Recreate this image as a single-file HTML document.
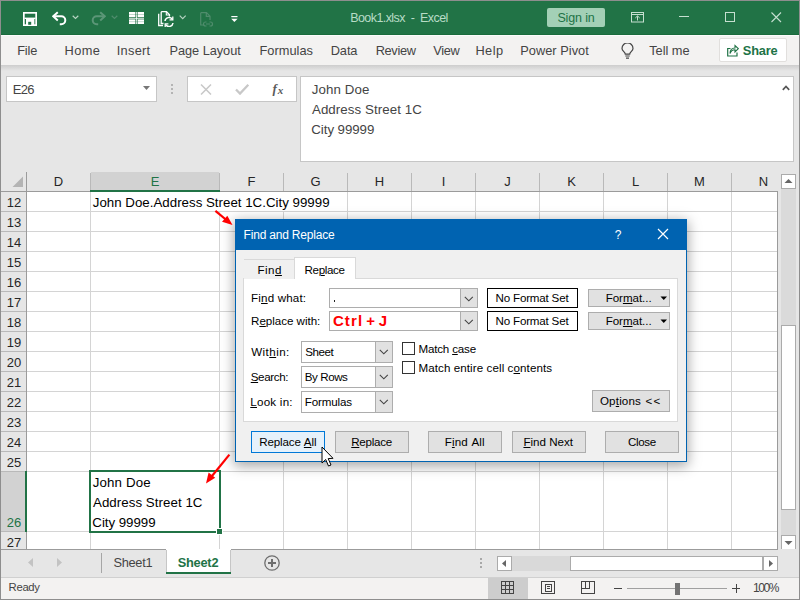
<!DOCTYPE html>
<html><head><meta charset="utf-8">
<style>
*{box-sizing:border-box;margin:0;padding:0}
html,body{width:800px;height:600px;overflow:hidden;background:#e6e6e6;font-family:"Liberation Sans",sans-serif;}
.a{position:absolute}
.t{position:absolute;white-space:nowrap}
u{text-decoration:underline;text-underline-offset:1px;text-decoration-thickness:1.2px}
#win{position:absolute;left:0;top:0;width:800px;height:600px;overflow:hidden;background:#e6e6e6}
</style></head><body>
<div id="win">
<div class="a" style="left:0px;top:0px;width:800px;height:1px;background:#8e8e8e;"></div>
<div class="a" style="left:0px;top:0px;width:1px;height:600px;background:#8e8e8e;"></div>
<div class="a" style="left:799px;top:0px;width:1px;height:600px;background:#8e8e8e;"></div>
<div class="a" style="left:0px;top:599px;width:800px;height:1px;background:#8e8e8e;"></div>
<div class="a" style="left:1px;top:1px;width:798px;height:34px;background:#217346;"></div>
<div class="t" style="left:350.22px;top:9.67px;font-size:12.5px;line-height:16px;color:#b8dcc6;letter-spacing:-0.576px;">Book1.xlsx&nbsp;&nbsp;-&nbsp;&nbsp;Excel</div>
<div class="a" style="left:547px;top:8px;width:58px;height:19px;background:#a3d0b6;border-radius:2px;"></div>
<div class="t" style="left:557.43px;top:9.67px;font-size:12.5px;line-height:16px;color:#217346;letter-spacing:-0.140px;">Sign&nbsp;in</div>
<div class="a" style="left:1px;top:34px;width:798px;height:1px;background:#1a6b3c;"></div>
<div class="a" style="left:1px;top:35px;width:798px;height:30px;background:#f3f2f1;"></div>
<div class="a" style="left:1px;top:35px;width:798px;height:1px;background:#fbfbfb;"></div>
<div class="a" style="left:1px;top:65px;width:798px;height:6px;background:linear-gradient(#cdcdcd,#e6e6e6);"></div>
<div class="t" style="left:17.15px;top:42.06px;font-size:12.8px;line-height:17px;color:#444;letter-spacing:-0.169px;">File</div>
<div class="t" style="left:64.45px;top:42.06px;font-size:12.8px;line-height:17px;color:#444;letter-spacing:0.458px;">Home</div>
<div class="t" style="left:116.82px;top:42.06px;font-size:12.8px;line-height:17px;color:#444;letter-spacing:0.252px;">Insert</div>
<div class="t" style="left:169.45px;top:42.06px;font-size:12.8px;line-height:17px;color:#444;letter-spacing:-0.049px;">Page&nbsp;Layout</div>
<div class="t" style="left:259.45px;top:42.06px;font-size:12.8px;line-height:17px;color:#444;letter-spacing:0.024px;">Formulas</div>
<div class="t" style="left:330.70px;top:42.06px;font-size:12.8px;line-height:17px;color:#444;letter-spacing:-0.079px;">Data</div>
<div class="t" style="left:375.70px;top:42.06px;font-size:12.8px;line-height:17px;color:#444;letter-spacing:-0.340px;">Review</div>
<div class="t" style="left:433.19px;top:42.06px;font-size:12.8px;line-height:17px;color:#444;letter-spacing:-0.323px;">View</div>
<div class="t" style="left:475.45px;top:42.06px;font-size:12.8px;line-height:17px;color:#444;letter-spacing:0.421px;">Help</div>
<div class="t" style="left:520.20px;top:42.06px;font-size:12.8px;line-height:17px;color:#444;letter-spacing:0.035px;">Power&nbsp;Pivot</div>
<div class="t" style="left:649.21px;top:42.06px;font-size:12.8px;line-height:17px;color:#444;letter-spacing:-0.018px;">Tell&nbsp;me</div>
<div class="a" style="left:719px;top:38px;width:68px;height:24px;background:#fff;border:1px solid #e1dfdd;border-radius:2px;"></div>
<div class="t" style="left:742.83px;top:42.06px;font-size:12.8px;line-height:17px;color:#217346;letter-spacing:-0.192px;font-weight:bold;">Share</div>
<div class="a" style="left:6px;top:76px;width:151px;height:26px;background:#fff;border:1px solid #c6c6c6;"></div>
<div class="t" style="left:12.73px;top:81.00px;font-size:13px;line-height:17px;color:#444;letter-spacing:-0.647px;">E26</div>
<div class="a" style="left:187px;top:76px;width:110px;height:26px;background:#fff;border:1px solid #c6c6c6;"></div>
<div class="a" style="left:300px;top:76px;width:494px;height:86px;background:#fff;border:1px solid #c6c6c6;"></div>
<div class="t" style="left:311.79px;top:80.89px;font-size:13.3px;line-height:17px;color:#444;letter-spacing:0.088px;">John&nbsp;Doe</div>
<div class="t" style="left:311.97px;top:100.89px;font-size:13.3px;line-height:17px;color:#444;letter-spacing:0.070px;">Address&nbsp;Street&nbsp;1C</div>
<div class="t" style="left:311.32px;top:120.89px;font-size:13.3px;line-height:17px;color:#444;letter-spacing:-0.059px;">City&nbsp;99999</div>
<div class="a" style="left:27px;top:192px;width:751px;height:358px;background:#fff;"></div>
<div class="a" style="left:90px;top:192px;width:1px;height:358px;background:#d4d4d4;"></div>
<div class="a" style="left:90px;top:173px;width:1px;height:18px;background:#b9b9b9;"></div>
<div class="a" style="left:219px;top:192px;width:1px;height:358px;background:#d4d4d4;"></div>
<div class="a" style="left:219px;top:173px;width:1px;height:18px;background:#b9b9b9;"></div>
<div class="a" style="left:283px;top:192px;width:1px;height:358px;background:#d4d4d4;"></div>
<div class="a" style="left:283px;top:173px;width:1px;height:18px;background:#b9b9b9;"></div>
<div class="a" style="left:347px;top:192px;width:1px;height:358px;background:#d4d4d4;"></div>
<div class="a" style="left:347px;top:173px;width:1px;height:18px;background:#b9b9b9;"></div>
<div class="a" style="left:411px;top:192px;width:1px;height:358px;background:#d4d4d4;"></div>
<div class="a" style="left:411px;top:173px;width:1px;height:18px;background:#b9b9b9;"></div>
<div class="a" style="left:475px;top:192px;width:1px;height:358px;background:#d4d4d4;"></div>
<div class="a" style="left:475px;top:173px;width:1px;height:18px;background:#b9b9b9;"></div>
<div class="a" style="left:539px;top:192px;width:1px;height:358px;background:#d4d4d4;"></div>
<div class="a" style="left:539px;top:173px;width:1px;height:18px;background:#b9b9b9;"></div>
<div class="a" style="left:603px;top:192px;width:1px;height:358px;background:#d4d4d4;"></div>
<div class="a" style="left:603px;top:173px;width:1px;height:18px;background:#b9b9b9;"></div>
<div class="a" style="left:667px;top:192px;width:1px;height:358px;background:#d4d4d4;"></div>
<div class="a" style="left:667px;top:173px;width:1px;height:18px;background:#b9b9b9;"></div>
<div class="a" style="left:731px;top:192px;width:1px;height:358px;background:#d4d4d4;"></div>
<div class="a" style="left:731px;top:173px;width:1px;height:18px;background:#b9b9b9;"></div>
<div class="a" style="left:27px;top:211px;width:751px;height:1px;background:#d4d4d4;"></div>
<div class="a" style="left:1px;top:211px;width:25px;height:1px;background:#b9b9b9;"></div>
<div class="a" style="left:27px;top:231px;width:751px;height:1px;background:#d4d4d4;"></div>
<div class="a" style="left:1px;top:231px;width:25px;height:1px;background:#b9b9b9;"></div>
<div class="a" style="left:27px;top:251px;width:751px;height:1px;background:#d4d4d4;"></div>
<div class="a" style="left:1px;top:251px;width:25px;height:1px;background:#b9b9b9;"></div>
<div class="a" style="left:27px;top:271px;width:751px;height:1px;background:#d4d4d4;"></div>
<div class="a" style="left:1px;top:271px;width:25px;height:1px;background:#b9b9b9;"></div>
<div class="a" style="left:27px;top:291px;width:751px;height:1px;background:#d4d4d4;"></div>
<div class="a" style="left:1px;top:291px;width:25px;height:1px;background:#b9b9b9;"></div>
<div class="a" style="left:27px;top:311px;width:751px;height:1px;background:#d4d4d4;"></div>
<div class="a" style="left:1px;top:311px;width:25px;height:1px;background:#b9b9b9;"></div>
<div class="a" style="left:27px;top:331px;width:751px;height:1px;background:#d4d4d4;"></div>
<div class="a" style="left:1px;top:331px;width:25px;height:1px;background:#b9b9b9;"></div>
<div class="a" style="left:27px;top:351px;width:751px;height:1px;background:#d4d4d4;"></div>
<div class="a" style="left:1px;top:351px;width:25px;height:1px;background:#b9b9b9;"></div>
<div class="a" style="left:27px;top:371px;width:751px;height:1px;background:#d4d4d4;"></div>
<div class="a" style="left:1px;top:371px;width:25px;height:1px;background:#b9b9b9;"></div>
<div class="a" style="left:27px;top:391px;width:751px;height:1px;background:#d4d4d4;"></div>
<div class="a" style="left:1px;top:391px;width:25px;height:1px;background:#b9b9b9;"></div>
<div class="a" style="left:27px;top:411px;width:751px;height:1px;background:#d4d4d4;"></div>
<div class="a" style="left:1px;top:411px;width:25px;height:1px;background:#b9b9b9;"></div>
<div class="a" style="left:27px;top:431px;width:751px;height:1px;background:#d4d4d4;"></div>
<div class="a" style="left:1px;top:431px;width:25px;height:1px;background:#b9b9b9;"></div>
<div class="a" style="left:27px;top:451px;width:751px;height:1px;background:#d4d4d4;"></div>
<div class="a" style="left:1px;top:451px;width:25px;height:1px;background:#b9b9b9;"></div>
<div class="a" style="left:27px;top:471px;width:751px;height:1px;background:#d4d4d4;"></div>
<div class="a" style="left:1px;top:471px;width:25px;height:1px;background:#b9b9b9;"></div>
<div class="a" style="left:27px;top:531px;width:751px;height:1px;background:#d4d4d4;"></div>
<div class="a" style="left:1px;top:531px;width:25px;height:1px;background:#b9b9b9;"></div>
<div class="a" style="left:219px;top:192px;width:1px;height:19px;background:#fff;"></div>
<div class="a" style="left:283px;top:192px;width:1px;height:19px;background:#fff;"></div>
<div class="a" style="left:26px;top:172px;width:1px;height:378px;background:#9b9b9b;"></div>
<div class="a" style="left:1px;top:191px;width:777px;height:1px;background:#9b9b9b;"></div>
<div class="a" style="left:777px;top:192px;width:1px;height:358px;background:#9b9b9b;"></div>
<div class="a" style="left:91px;top:172px;width:128px;height:18px;background:#d2d2d2;"></div>
<div class="a" style="left:90px;top:190px;width:130px;height:2px;background:#217346;"></div>
<div class="a" style="left:1px;top:472px;width:24px;height:59px;background:#d2d2d2;"></div>
<div class="a" style="left:25px;top:471px;width:2px;height:61px;background:#217346;"></div>
<svg class="a" style="left:12px;top:176px" width="12" height="12"><path d="M11 0.5 L11 11 L0.5 11 Z" fill="#b4b4b4"/></svg>
<div class="t" style="left:58.5px;top:173px;width:60px;margin-left:-30px;text-align:center;font-size:13px;line-height:18px;color:#262626">D</div>
<div class="t" style="left:155px;top:173px;width:60px;margin-left:-30px;text-align:center;font-size:13px;line-height:18px;color:#217346">E</div>
<div class="t" style="left:251.5px;top:173px;width:60px;margin-left:-30px;text-align:center;font-size:13px;line-height:18px;color:#262626">F</div>
<div class="t" style="left:315.5px;top:173px;width:60px;margin-left:-30px;text-align:center;font-size:13px;line-height:18px;color:#262626">G</div>
<div class="t" style="left:379.5px;top:173px;width:60px;margin-left:-30px;text-align:center;font-size:13px;line-height:18px;color:#262626">H</div>
<div class="t" style="left:443.5px;top:173px;width:60px;margin-left:-30px;text-align:center;font-size:13px;line-height:18px;color:#262626">I</div>
<div class="t" style="left:507.5px;top:173px;width:60px;margin-left:-30px;text-align:center;font-size:13px;line-height:18px;color:#262626">J</div>
<div class="t" style="left:571.5px;top:173px;width:60px;margin-left:-30px;text-align:center;font-size:13px;line-height:18px;color:#262626">K</div>
<div class="t" style="left:635.5px;top:173px;width:60px;margin-left:-30px;text-align:center;font-size:13px;line-height:18px;color:#262626">L</div>
<div class="t" style="left:699.5px;top:173px;width:60px;margin-left:-30px;text-align:center;font-size:13px;line-height:18px;color:#262626">M</div>
<div class="t" style="left:763.5px;top:173px;width:60px;margin-left:-30px;text-align:center;font-size:13px;line-height:18px;color:#262626">N</div>
<div class="t" style="left:1.6px;top:194px;width:25px;text-align:center;font-size:13px;line-height:18px;color:#262626">12</div>
<div class="t" style="left:1.6px;top:214px;width:25px;text-align:center;font-size:13px;line-height:18px;color:#262626">13</div>
<div class="t" style="left:1.6px;top:234px;width:25px;text-align:center;font-size:13px;line-height:18px;color:#262626">14</div>
<div class="t" style="left:1.6px;top:254px;width:25px;text-align:center;font-size:13px;line-height:18px;color:#262626">15</div>
<div class="t" style="left:1.6px;top:274px;width:25px;text-align:center;font-size:13px;line-height:18px;color:#262626">16</div>
<div class="t" style="left:1.6px;top:294px;width:25px;text-align:center;font-size:13px;line-height:18px;color:#262626">17</div>
<div class="t" style="left:1.6px;top:314px;width:25px;text-align:center;font-size:13px;line-height:18px;color:#262626">18</div>
<div class="t" style="left:1.6px;top:334px;width:25px;text-align:center;font-size:13px;line-height:18px;color:#262626">19</div>
<div class="t" style="left:1.6px;top:354px;width:25px;text-align:center;font-size:13px;line-height:18px;color:#262626">20</div>
<div class="t" style="left:1.6px;top:374px;width:25px;text-align:center;font-size:13px;line-height:18px;color:#262626">21</div>
<div class="t" style="left:1.6px;top:394px;width:25px;text-align:center;font-size:13px;line-height:18px;color:#262626">22</div>
<div class="t" style="left:1.6px;top:414px;width:25px;text-align:center;font-size:13px;line-height:18px;color:#262626">23</div>
<div class="t" style="left:1.6px;top:434px;width:25px;text-align:center;font-size:13px;line-height:18px;color:#262626">24</div>
<div class="t" style="left:1.6px;top:454px;width:25px;text-align:center;font-size:13px;line-height:18px;color:#262626">25</div>
<div class="t" style="left:1.6px;top:514px;width:25px;text-align:center;font-size:13px;line-height:18px;color:#217346">26</div>
<div class="t" style="left:1.6px;top:534px;width:25px;text-align:center;font-size:13px;line-height:18px;color:#262626">27</div>
<div class="t" style="left:92.79px;top:193.89px;font-size:13.3px;line-height:17px;color:#000;letter-spacing:0.007px;">John&nbsp;Doe.Address&nbsp;Street&nbsp;1C.City&nbsp;99999</div>
<div class="t" style="left:92.79px;top:473.89px;font-size:13.3px;line-height:17px;color:#000;letter-spacing:0.124px;">John&nbsp;Doe</div>
<div class="t" style="left:92.97px;top:493.89px;font-size:13.3px;line-height:17px;color:#000;letter-spacing:0.054px;">Address&nbsp;Street&nbsp;1C</div>
<div class="t" style="left:92.32px;top:513.89px;font-size:13.3px;line-height:17px;color:#000;letter-spacing:-0.031px;">City&nbsp;99999</div>
<div class="a" style="left:89px;top:470px;width:132px;height:63px;border:2px solid #217346;"></div>
<div class="a" style="left:216px;top:528px;width:7px;height:7px;background:#fff;"></div>
<div class="a" style="left:217px;top:529px;width:5px;height:5px;background:#217346;"></div>
<div class="a" style="left:778px;top:172px;width:21px;height:378px;background:#e6e6e6;"></div>
<div class="a" style="left:781px;top:174px;width:15px;height:15px;background:#fff;border:1px solid #ababab;"></div>
<div class="a" style="left:781px;top:189px;width:15px;height:136px;background:#dadada;"></div>
<div class="a" style="left:781px;top:325px;width:15px;height:185px;background:#fff;border:1px solid #ababab;"></div>
<div class="a" style="left:781px;top:510px;width:15px;height:25px;background:#dadada;"></div>
<div class="a" style="left:781px;top:535px;width:15px;height:15px;background:#fff;border:1px solid #ababab;"></div>
<svg class="a" style="left:784px;top:178px" width="10" height="6"><path d="M0.5 5 L4.5 1 L8.5 5 Z" fill="#666"/></svg>
<svg class="a" style="left:784px;top:540px" width="10" height="6"><path d="M0.5 1 L4.5 5 L8.5 1 Z" fill="#666"/></svg>
<div class="a" style="left:1px;top:549px;width:798px;height:28px;background:#e6e6e6;"></div>
<div class="a" style="left:1px;top:549px;width:777px;height:1px;background:#9b9b9b;"></div>
<div class="a" style="left:166px;top:549px;width:65px;height:25px;background:#fff;"></div>
<div class="a" style="left:166px;top:550px;width:1px;height:24px;background:#c6c6c6;"></div>
<div class="a" style="left:230px;top:550px;width:1px;height:24px;background:#c6c6c6;"></div>
<div class="a" style="left:166px;top:572px;width:65px;height:2px;background:#217346;"></div>
<div class="a" style="left:101px;top:553px;width:1px;height:20px;background:#a6a6a6;"></div>
<svg class="a" style="left:27px;top:557px" width="8" height="12"><path d="M6 1 L1 5.5 L6 10 Z" fill="#c3c3c3"/></svg>
<svg class="a" style="left:55px;top:557px" width="8" height="12"><path d="M2 1 L7 5.5 L2 10 Z" fill="#c3c3c3"/></svg>
<div class="t" style="left:113.42px;top:554.06px;font-size:12.8px;line-height:17px;color:#444;letter-spacing:-0.273px;">Sheet1</div>
<div class="t" style="left:177.63px;top:554.06px;font-size:12.8px;line-height:17px;color:#217346;letter-spacing:-0.219px;font-weight:bold;">Sheet2</div>
<svg class="a" style="left:263px;top:554px" width="18" height="18"><circle cx="9" cy="9" r="7.2" fill="none" stroke="#6e6e6e" stroke-width="1.3"/><path d="M5 9 H13 M9 5 V13" stroke="#6e6e6e" stroke-width="2"/></svg>
<div class="a" style="left:480px;top:558px;width:2px;height:2px;background:#a8a8a8;"></div>
<div class="a" style="left:480px;top:562px;width:2px;height:2px;background:#a8a8a8;"></div>
<div class="a" style="left:480px;top:566px;width:2px;height:2px;background:#a8a8a8;"></div>
<div class="a" style="left:497px;top:556px;width:15px;height:15px;background:#fff;border:1px solid #ababab;"></div>
<div class="a" style="left:512px;top:556px;width:58px;height:15px;background:#d9d9d9;"></div>
<div class="a" style="left:570px;top:556px;width:193px;height:15px;background:#fff;border:1px solid #ababab;"></div>
<div class="a" style="left:763px;top:556px;width:15px;height:15px;background:#fff;border:1px solid #ababab;"></div>
<svg class="a" style="left:500px;top:558px" width="8" height="11"><path d="M6 2 L2 5.5 L6 9 Z" fill="#666"/></svg>
<svg class="a" style="left:767px;top:558px" width="8" height="11"><path d="M2 2 L6 5.5 L2 9 Z" fill="#666"/></svg>
<div class="a" style="left:1px;top:577px;width:798px;height:22px;background:#f3f2f1;"></div>
<div class="a" style="left:1px;top:577px;width:798px;height:1px;background:#d0d0d0;"></div>
<div class="t" style="left:8.57px;top:580.08px;font-size:11.3px;line-height:15px;color:#444;letter-spacing:-0.304px;">Ready</div>
<div class="a" style="left:488px;top:578px;width:40px;height:21px;background:#cdcdcd;"></div>
<div class="a" style="left:614px;top:588px;width:8px;height:1px;background:#444;"></div>
<div class="a" style="left:627px;top:588px;width:100px;height:1px;background:#a0a0a0;"></div>
<div class="a" style="left:675px;top:583px;width:5px;height:12px;background:#737373;"></div>
<div class="a" style="left:732px;top:588px;width:8px;height:1px;background:#444;"></div>
<div class="a" style="left:735.5px;top:584px;width:1px;height:9px;background:#444;"></div>
<div class="t" style="left:753.09px;top:579.84px;font-size:12px;line-height:16px;color:#444;letter-spacing:-1.450px;">100%</div>
<svg class="a" style="left:23px;top:12px;" width="14" height="14" viewBox="0 0 14 14"><rect x="0.85" y="0.85" width="12.3" height="12.3" fill="none" stroke="#fff" stroke-width="1.7"/><rect x="3" y="6" width="8.4" height="7.5" fill="#fff"/><rect x="5.2" y="9.8" width="3" height="3" fill="#217346"/><rect x="1.5" y="5.6" width="11" height="1.4" fill="#fff"/></svg>
<svg class="a" style="left:52px;top:11px;" width="15" height="15" viewBox="0 0 15 15"><path d="M5.8 1.2 L1.2 5.3 L5.8 9.4" fill="none" stroke="#fff" stroke-width="2" stroke-linejoin="miter"/><path d="M2 5.3 H9.3 A4 4 0 0 1 9.3 13.3 H7.8" fill="none" stroke="#fff" stroke-width="2"/></svg>
<svg class="a" style="left:72px;top:15.3px;" width="8" height="5" viewBox="0 0 8 5"><path d="M0.7 0.7 L3.5 3.4 L6.3 0.7" fill="none" stroke="#b5d3c1" stroke-width="1.2"/></svg>
<svg class="a" style="left:91.2px;top:11px;" width="15" height="15" viewBox="0 0 15 15"><path d="M9.2 1.2 L13.8 5.3 L9.2 9.4" fill="none" stroke="#5b9677" stroke-width="2"/><path d="M13 5.3 H5.7 A4 4 0 0 0 5.7 13.3 H7.2" fill="none" stroke="#5b9677" stroke-width="2"/></svg>
<svg class="a" style="left:111px;top:15.3px;" width="8" height="5" viewBox="0 0 8 5"><path d="M0.7 0.7 L3.5 3.4 L6.3 0.7" fill="none" stroke="#4f8c6c" stroke-width="1.2"/></svg>
<svg class="a" style="left:128.9px;top:12.3px;" width="15.5" height="12.2" viewBox="0 0 15.5 12.2"><rect x="0" y="0" width="6.4" height="5.2" fill="#fff"/><rect x="8.6" y="0" width="6.9" height="5.2" fill="#fff"/><rect x="0" y="7.4" width="6.4" height="4.8" fill="#fff"/><rect x="8.6" y="7.4" width="6.9" height="4.8" fill="#fff"/><rect x="7.1" y="0" width="0.8" height="12.2" fill="#fff"/><rect x="0" y="5.9" width="15.5" height="0.8" fill="#fff"/><rect x="0" y="2.3" width="15.5" height="0.6" fill="#217346" opacity=".45"/><rect x="0" y="9.5" width="15.5" height="0.6" fill="#217346" opacity=".45"/></svg>
<svg class="a" style="left:158px;top:11px;" width="17" height="16" viewBox="0 0 17 16"><path d="M0.7 2.7 V14.5 H5" fill="none" stroke="#fff" stroke-width="1.3"/><path d="M3.2 0.7 H8.5 L11.5 3.7 V5.5 M3.2 0.7 V12.5 H5.5" fill="none" stroke="#fff" stroke-width="1.3"/><path d="M8.3 0.9 V4 H11.3" fill="none" stroke="#fff" stroke-width="1.1"/><path d="M7 10 A4 4 0 0 1 14.3 8.3 M15 12 A4 4 0 0 1 7.7 13.7" fill="none" stroke="#fff" stroke-width="1.5"/><path d="M14.8 5.6 V8.9 H11.5" fill="none" stroke="#fff" stroke-width="1.3"/><path d="M7.2 16 V12.9 H10.4" fill="none" stroke="#fff" stroke-width="1.3"/></svg>
<svg class="a" style="left:179px;top:15px;" width="8" height="5" viewBox="0 0 8 5"><path d="M0.7 0.7 L3.7 3.7 L6.7 0.7" fill="none" stroke="#b5d3c1" stroke-width="1.2"/></svg>
<svg class="a" style="left:200px;top:12px;" width="14" height="15" viewBox="0 0 14 15"><path d="M0.7 0.7 H6.5 L10 4.2 V8 M0.7 0.7 V13 H3.5 M6.3 0.9 V4.4 H9.8" fill="none" stroke="#4f8c6c" stroke-width="1.2"/><path d="M6.5 10 H5.5 A2 2 0 0 0 5.5 14 H6.5 M9.5 10 H10.5 A2 2 0 0 1 10.5 14 H9.5 M6 12 H10" fill="none" stroke="#4f8c6c" stroke-width="1.2"/></svg>
<svg class="a" style="left:231px;top:16px;" width="7" height="6" viewBox="0 0 7 6"><rect x="0.3" y="0" width="6.2" height="1.2" fill="#fff"/><path d="M0.2 2.8 H6.6 L3.4 6 Z" fill="#fff"/></svg>
<svg class="a" style="left:631px;top:12px;" width="14" height="11" viewBox="0 0 14 11"><rect x="0.5" y="0.5" width="12" height="9.5" fill="none" stroke="#c6dfd0" stroke-width="1"/><path d="M0.5 2.5 H12.5" stroke="#c6dfd0" stroke-width="1"/><path d="M6.5 8.5 V4.2 M4.3 6 L6.5 3.9 L8.7 6" fill="none" stroke="#c6dfd0" stroke-width="1"/></svg>
<div class="a" style="left:679px;top:16px;width:10px;height:1px;background:#c6dfd0"></div>
<div class="a" style="left:725px;top:12px;width:10px;height:10px;border:1px solid #c6dfd0"></div>
<svg class="a" style="left:771px;top:12px;" width="11" height="11" viewBox="0 0 11 11"><path d="M0.5 0.5 L10 10 M10 0.5 L0.5 10" stroke="#c6dfd0" stroke-width="1.1" fill="none"/></svg>
<svg class="a" style="left:621px;top:43px;" width="13" height="17" viewBox="0 0 13 17"><path d="M4.3 11.2 C4.3 9 1 8.2 1 5.4 A5.4 5.4 0 0 1 12 5.4 C12 8.2 8.7 9 8.7 11.2 Z" fill="none" stroke="#444" stroke-width="1.2"/><path d="M4.3 13 H8.7 M5 15.2 H8" stroke="#444" stroke-width="1.2"/></svg>
<svg class="a" style="left:727px;top:44px;" width="12" height="13" viewBox="0 0 12 13"><path d="M3.5 4.5 H0.7 V12 H10 V8.5" fill="none" stroke="#217346" stroke-width="1.2"/><path d="M3 9.5 C3 6 5 4 8 4 V1.5 L11.3 4.7 L8 8 V5.8 C6 5.8 4.2 6.5 3 9.5 Z" fill="none" stroke="#217346" stroke-width="1.1"/></svg>
<svg class="a" style="left:143px;top:86px;" width="8" height="5" viewBox="0 0 8 5"><path d="M0 0 H7 L3.5 4 Z" fill="#777"/></svg>
<div class="a" style="left:171px;top:84px;width:2px;height:2px;background:#b4b4b4"></div>
<div class="a" style="left:171px;top:88px;width:2px;height:2px;background:#b4b4b4"></div>
<div class="a" style="left:171px;top:92px;width:2px;height:2px;background:#b4b4b4"></div>
<svg class="a" style="left:200px;top:84px;" width="12" height="11" viewBox="0 0 12 11"><path d="M1 0.5 L11 10.5 M11 0.5 L1 10.5" stroke="#c8c8c8" stroke-width="1.5" fill="none"/></svg>
<svg class="a" style="left:235px;top:84px;" width="15" height="11" viewBox="0 0 15 11"><path d="M1 5.5 L5 9.6 L13.3 0.8" stroke="#c8c8c8" stroke-width="2.3" fill="none"/></svg>
<div class="t" style="left:272.5px;top:81px;font-family:'Liberation Serif',serif;font-style:italic;font-weight:bold;font-size:13px;line-height:15px;color:#5a5a5a;letter-spacing:0.8px">f<span style="font-size:11px;position:relative;top:1px;left:0px;letter-spacing:0">x</span></div>
<svg class="a" style="left:781.5px;top:85px;" width="8" height="6" viewBox="0 0 8 6"><path d="M0.8 4.8 L4 1.5 L7.2 4.8" stroke="#555" stroke-width="1.7" fill="none"/></svg>
<svg class="a" style="left:501px;top:581px;" width="13" height="13" viewBox="0 0 13 13"><g shape-rendering="crispEdges" fill="#444"><rect x="0" y="0" width="1.15" height="13"/><rect x="0" y="0" width="13" height="1.15"/><rect x="4.15" y="0" width="1.15" height="13"/><rect x="0" y="4.15" width="13" height="1.15"/><rect x="8.15" y="0" width="1.15" height="13"/><rect x="0" y="8.15" width="13" height="1.15"/><rect x="11.85" y="0" width="1.15" height="13"/><rect x="0" y="11.85" width="13" height="1.15"/></g></svg>
<svg class="a" style="left:541px;top:581px;" width="14" height="13" viewBox="0 0 14 13"><g shape-rendering="crispEdges" fill="#444"><rect x="0" y="0" width="14" height="1.2"/><rect x="0" y="11.8" width="14" height="1.2"/><rect x="0" y="0" width="1.2" height="13"/><rect x="12.8" y="0" width="1.2" height="13"/><rect x="4" y="3" width="7" height="1"/><rect x="4" y="10" width="7" height="1"/><rect x="4" y="3" width="1" height="8"/><rect x="10" y="3" width="1" height="8"/><rect x="6" y="5" width="3" height="1"/><rect x="6" y="7" width="3" height="1"/></g></svg>
<svg class="a" style="left:581px;top:581px;" width="14" height="13" viewBox="0 0 14 13"><g shape-rendering="crispEdges"><rect x="0.6" y="0.6" width="12.8" height="11.8" fill="none" stroke="#444" stroke-width="1.2"/><rect x="4" y="0" width="1" height="7.5" fill="#444"/><rect x="8.4" y="0" width="1" height="7.5" fill="#444"/><rect x="0" y="6.6" width="9.4" height="1" fill="#444"/></g></svg>
<div class="a" style="left:235px;top:219px;width:452px;height:243px;background:#f0f0f0;border:1px solid #0063b1;box-shadow:0 3px 12px 1px rgba(0,0,0,0.35);"></div>
<div class="a" style="left:235px;top:219px;width:452px;height:31px;background:#0063b1;"></div>
<div class="t" style="left:243.52px;top:226.84px;font-size:12px;line-height:16px;color:#fff;letter-spacing:-0.186px;">Find&nbsp;and&nbsp;Replace</div>
<div class="t" style="left:614.71px;top:226.84px;font-size:12px;line-height:16px;color:#fff;letter-spacing:0.000px;">?</div>
<svg class="a" style="left:657px;top:228px" width="12" height="12"><path d="M1 1 L11 11 M11 1 L1 11" stroke="#fff" stroke-width="1.2" fill="none"/></svg>
<div class="a" style="left:243px;top:278px;width:435px;height:144px;background:#fff;border:1px solid #d9d9d9;"></div>
<div class="a" style="left:244px;top:259px;width:51px;height:20px;background:#f0f0f0;border-top:1px solid #d9d9d9;"></div>
<div class="a" style="left:294px;top:257px;width:62px;height:22px;background:#fff;border:1px solid #d9d9d9;border-bottom:none;"></div>
<div class="t" style="left:257.55px;top:262.48px;font-size:11.6px;line-height:15px;color:#000;letter-spacing:0.445px;">Fin<u>d</u></div>
<div class="t" style="left:304.55px;top:262.48px;font-size:11.6px;line-height:15px;color:#000;letter-spacing:-0.349px;">Re<u>p</u>lace</div>
<div class="t" style="left:251.05px;top:290.48px;font-size:11.6px;line-height:15px;color:#000;letter-spacing:0.166px;">Fi<u>n</u>d&nbsp;what:</div>
<div class="t" style="left:251.05px;top:313.48px;font-size:11.6px;line-height:15px;color:#000;letter-spacing:-0.031px;">R<u>e</u>place&nbsp;with:</div>
<div class="a" style="left:329px;top:288px;width:149px;height:20px;background:#fff;border:1px solid #adadad;"></div>
<div class="a" style="left:460px;top:288px;width:18px;height:20px;background:#e1e1e1;border:1px solid #adadad;"></div>
<svg class="a" style="left:464px;top:296.4px" width="10" height="7"><path d="M0.8 0.8 L4.8 4.8 L8.8 0.8" stroke="#444" stroke-width="1.1" fill="none"/></svg>
<div class="a" style="left:329px;top:311px;width:149px;height:20px;background:#fff;border:1px solid #adadad;"></div>
<div class="a" style="left:460px;top:311px;width:18px;height:20px;background:#e1e1e1;border:1px solid #adadad;"></div>
<svg class="a" style="left:464px;top:319.4px" width="10" height="7"><path d="M0.8 0.8 L4.8 4.8 L8.8 0.8" stroke="#444" stroke-width="1.1" fill="none"/></svg>
<div class="a" style="left:334px;top:300px;width:1px;height:2px;background:#222;"></div>
<div class="t" style="left:332.88px;top:311.20px;font-size:15px;line-height:20px;color:#ff0000;letter-spacing:1.115px;font-weight:bold;">Ctrl</div>
<div class="t" style="left:366.37px;top:311.20px;font-size:15px;line-height:20px;color:#ff0000;letter-spacing:0.000px;font-weight:bold;">+</div>
<div class="t" style="left:378.77px;top:311.20px;font-size:15px;line-height:20px;color:#ff0000;letter-spacing:0.000px;font-weight:bold;">J</div>
<div class="a" style="left:487px;top:288px;width:91px;height:20px;background:#fff;border:1px solid #000;outline:0.5px solid #000;outline-offset:-1.5px;"></div>
<div class="t" style="left:495.55px;top:290.48px;font-size:11.6px;line-height:15px;color:#000;letter-spacing:-0.191px;">No&nbsp;Format&nbsp;Set</div>
<div class="a" style="left:588px;top:289px;width:82px;height:18px;background:#e1e1e1;border:1px solid #adadad;"></div>
<div class="t" style="left:605.65px;top:290.48px;font-size:11.6px;line-height:15px;color:#000;letter-spacing:-0.049px;">For<u>m</u>at...</div>
<svg class="a" style="left:660px;top:296px" width="8" height="5"><path d="M0.5 0.5 L7 0.5 L3.75 4 Z" fill="#000"/></svg>
<div class="a" style="left:487px;top:311px;width:91px;height:20px;background:#fff;border:1px solid #000;outline:0.5px solid #000;outline-offset:-1.5px;"></div>
<div class="t" style="left:495.55px;top:313.48px;font-size:11.6px;line-height:15px;color:#000;letter-spacing:-0.191px;">No&nbsp;Format&nbsp;Set</div>
<div class="a" style="left:588px;top:312px;width:82px;height:18px;background:#e1e1e1;border:1px solid #adadad;"></div>
<div class="t" style="left:605.65px;top:313.48px;font-size:11.6px;line-height:15px;color:#000;letter-spacing:-0.049px;">For<u>m</u>at...</div>
<svg class="a" style="left:660px;top:319px" width="8" height="5"><path d="M0.5 0.5 L7 0.5 L3.75 4 Z" fill="#000"/></svg>
<div class="t" style="left:251.20px;top:344.48px;font-size:11.6px;line-height:15px;color:#000;letter-spacing:0.443px;">Wit<u>h</u>in:</div>
<div class="a" style="left:301px;top:341px;width:92px;height:22px;background:#fff;border:1px solid #adadad;"></div>
<div class="a" style="left:375px;top:341px;width:18px;height:22px;background:#e1e1e1;border:1px solid #adadad;"></div>
<svg class="a" style="left:379px;top:349.2px" width="10" height="7"><path d="M0.8 0.8 L4.8 4.8 L8.8 0.8" stroke="#444" stroke-width="1.1" fill="none"/></svg>
<div class="t" style="left:305.22px;top:344.48px;font-size:11.6px;line-height:15px;color:#000;letter-spacing:-0.426px;">Sheet</div>
<div class="t" style="left:250.72px;top:369.48px;font-size:11.6px;line-height:15px;color:#000;letter-spacing:-0.357px;"><u>S</u>earch:</div>
<div class="a" style="left:301px;top:366px;width:92px;height:22px;background:#fff;border:1px solid #adadad;"></div>
<div class="a" style="left:375px;top:366px;width:18px;height:22px;background:#e1e1e1;border:1px solid #adadad;"></div>
<svg class="a" style="left:379px;top:374.2px" width="10" height="7"><path d="M0.8 0.8 L4.8 4.8 L8.8 0.8" stroke="#444" stroke-width="1.1" fill="none"/></svg>
<div class="t" style="left:304.80px;top:369.48px;font-size:11.6px;line-height:15px;color:#000;letter-spacing:-0.441px;">By&nbsp;Rows</div>
<div class="t" style="left:250.30px;top:394.48px;font-size:11.6px;line-height:15px;color:#000;letter-spacing:0.233px;"><u>L</u>ook&nbsp;in:</div>
<div class="a" style="left:301px;top:391px;width:92px;height:22px;background:#fff;border:1px solid #adadad;"></div>
<div class="a" style="left:375px;top:391px;width:18px;height:22px;background:#e1e1e1;border:1px solid #adadad;"></div>
<svg class="a" style="left:379px;top:399.2px" width="10" height="7"><path d="M0.8 0.8 L4.8 4.8 L8.8 0.8" stroke="#444" stroke-width="1.1" fill="none"/></svg>
<div class="t" style="left:304.80px;top:394.48px;font-size:11.6px;line-height:15px;color:#000;letter-spacing:-0.139px;">Formulas</div>
<div class="a" style="left:402px;top:342px;width:13px;height:13px;background:#fff;border:1px solid #333;"></div>
<div class="a" style="left:402px;top:361px;width:13px;height:13px;background:#fff;border:1px solid #333;"></div>
<div class="t" style="left:418.45px;top:341.48px;font-size:11.6px;line-height:15px;color:#000;letter-spacing:-0.183px;">Match&nbsp;<u>c</u>ase</div>
<div class="t" style="left:418.45px;top:360.48px;font-size:11.6px;line-height:15px;color:#000;letter-spacing:0.086px;">Match&nbsp;entire&nbsp;cell&nbsp;c<u>o</u>ntents</div>
<div class="a" style="left:592px;top:390px;width:78px;height:22px;background:#e1e1e1;border:1px solid #adadad;"></div>
<div class="t" style="left:599.95px;top:393.48px;font-size:11.6px;line-height:15px;color:#000;letter-spacing:0.165px;">Op<u>t</u>ions</div>
<div class="t" style="left:645.43px;top:393.48px;font-size:11.6px;line-height:15px;color:#000;letter-spacing:0.000px;">&lt;</div>
<div class="t" style="left:653.43px;top:393.48px;font-size:11.6px;line-height:15px;color:#000;letter-spacing:0.000px;">&lt;</div>
<div class="a" style="left:251px;top:431px;width:74px;height:22px;background:#e5f1fb;border:1px solid #0078d7;"></div>
<div class="t" style="left:259.25px;top:434.48px;font-size:11.6px;line-height:15px;color:#000;letter-spacing:-0.145px;">Replace&nbsp;<u>A</u>ll</div>
<div class="a" style="left:335px;top:431px;width:74px;height:22px;background:#e1e1e1;border:1px solid #adadad;"></div>
<div class="t" style="left:351.25px;top:434.48px;font-size:11.6px;line-height:15px;color:#000;letter-spacing:-0.282px;"><u>R</u>eplace</div>
<div class="a" style="left:428px;top:431px;width:74px;height:22px;background:#e1e1e1;border:1px solid #adadad;"></div>
<div class="t" style="left:444.65px;top:434.48px;font-size:11.6px;line-height:15px;color:#000;letter-spacing:0.193px;">F<u>i</u>nd&nbsp;All</div>
<div class="a" style="left:512px;top:431px;width:74px;height:22px;background:#e1e1e1;border:1px solid #adadad;"></div>
<div class="t" style="left:523.45px;top:434.48px;font-size:11.6px;line-height:15px;color:#000;letter-spacing:-0.000px;"><u>F</u>ind&nbsp;Next</div>
<div class="a" style="left:605px;top:431px;width:74px;height:22px;background:#e1e1e1;border:1px solid #adadad;"></div>
<div class="t" style="left:628.01px;top:434.48px;font-size:11.6px;line-height:15px;color:#000;letter-spacing:-0.388px;">Close</div>
<svg class="a" style="left:200px;top:200px" width="60" height="40"><path d="M15.4 10.8 L27 20.5" stroke="#f00" stroke-width="2.2"/><path d="M32.5 25 L22 21.8 L27.3 15.8 Z" fill="#f00"/></svg>
<svg class="a" style="left:190px;top:440px" width="60" height="60"><path d="M39.4 14.6 L22 36" stroke="#f00" stroke-width="2.2"/><path d="M16 43.5 L18.6 32.5 L25.2 37.8 Z" fill="#f00"/></svg>
<svg class="a" style="left:321px;top:446px" width="14" height="22"><path d="M1 1 L1 17 L4.7 13.5 L7.5 20 L10 19 L7.2 12.6 L12 12.3 Z" fill="#fff" stroke="#000" stroke-width="1"/></svg>
</div>
</body></html>
